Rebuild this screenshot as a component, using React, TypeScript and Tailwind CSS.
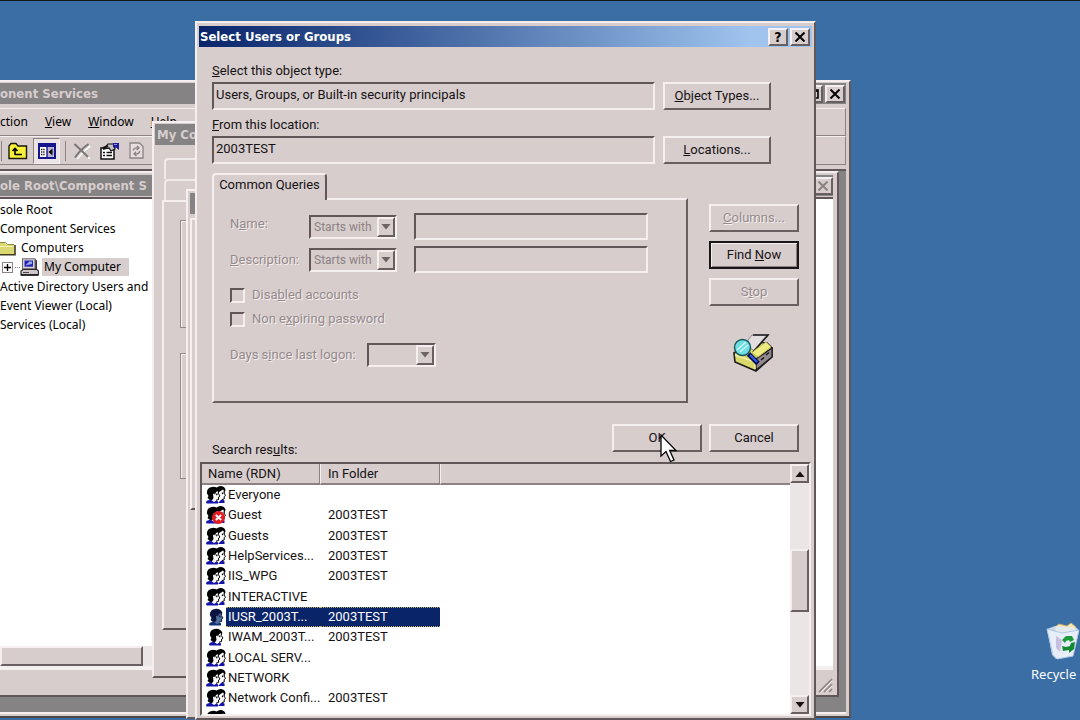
import type { ReactNode } from "react";

const RAISED =
  "border-2 border-t-[#f5efef] border-l-[#f5efef] border-r-[#6a5f60] border-b-[#6a5f60] bg-[#d7cdcd]";
const SUNKEN =
  "border-2 border-t-[#625758] border-l-[#625758] border-r-[#f5efef] border-b-[#f5efef] bg-[#d7cdcd]";
const DISABLED = "text-[#948a8c] [text-shadow:1px_1px_0_#f6f0f0]";

function Caption({ label, children, dim }: { label: string; children: ReactNode; dim?: boolean }) {
  return (
    <button
      type="button"
      aria-label={label}
      className={`flex h-[18px] w-5 items-center justify-center ${RAISED} ${dim ? "text-[#8c8283]" : "text-black"}`}
    >
      {children}
    </button>
  );
}

function Cross() {
  return (
    <svg width="12" height="10" viewBox="0 0 12 10" fill="none" stroke="currentColor" strokeWidth="2">
      <path d="M1.5 0.5 L10.5 9.5 M10.5 0.5 L1.5 9.5" />
    </svg>
  );
}

function Down({ className }: { className?: string }) {
  return (
    <svg width="10" height="6" viewBox="0 0 10 6" className={className}>
      <path d="M0.500 0 H9.500 L5 5.500 Z" fill="currentColor" />
    </svg>
  );
}

/* ---------- console window ---------- */

function FolderUp() {
  return (
    <svg width="20" height="18" viewBox="0 0 20 18">
      <path d="M1 4 L3 1.5 H8 L10 4 H18.5 V16.5 H1 Z" fill="#f6f03c" stroke="#1c1a08" strokeWidth="1.4" />
      <path d="M7 12.5 H14 M7 13 V7.5 M4.5 9 L7 6.5 L9.5 9" fill="none" stroke="#000" strokeWidth="1.6" />
    </svg>
  );
}

function TreeToggle() {
  return (
    <svg width="18" height="16" viewBox="0 0 18 16">
      <rect x="1" y="1" width="16" height="14" fill="#fff" stroke="#14148c" strokeWidth="2" />
      <path d="M0 3 H18" stroke="#14148c" strokeWidth="2" />
      <rect x="9" y="4" width="7" height="10" fill="#b9b4d4" />
      <path d="M9 4 V14" stroke="#14148c" strokeWidth="1.4" />
      <path d="M3 6.5 H7 M3 9 H7 M3 11.5 H7" stroke="#222" strokeWidth="1.4" strokeDasharray="1.4 0.8" />
      <path d="M14.5 5.5 V12.5 L10.5 9 Z" fill="#000" />
    </svg>
  );
}

function DeleteIcon() {
  return (
    <svg width="18" height="16" viewBox="0 0 18 16" fill="none">
      <path d="M2.5 2 Q9 8 16 15 M16.5 2 Q8 8 3 15.5" stroke="#fff" strokeWidth="1.5" transform="translate(1 1)" />
      <path d="M1.5 1 Q8 7 15 14 M15.5 1 Q7 7 2 14.5" stroke="#7c7577" strokeWidth="2" />
    </svg>
  );
}

function PropertiesIcon() {
  return (
    <svg width="20" height="18" viewBox="0 0 20 18">
      <rect x="1" y="6" width="13" height="11" fill="#fff" stroke="#111" strokeWidth="1.5" />
      <path d="M3 10.5 H5 M3 13.5 H5 M6.5 10.5 H12 M6.5 13.5 H12" stroke="#111" strokeWidth="1.4" />
      <path d="M4 7 L8 2 L14 2 L15 7 L11 9 L9 6 Z" fill="#c9c1c1" stroke="#111" strokeWidth="1.2" />
      <path d="M3 6 L8 4" stroke="#111" strokeWidth="2" />
      <path d="M13 1 H19 V8 L16 5.5 H13 Z" fill="#1c1c9c" />
      <path d="M14 2.5 H17" stroke="#8f8fe0" strokeWidth="1" />
    </svg>
  );
}

function RefreshIcon() {
  return (
    <svg width="15" height="17" viewBox="0 0 15 17" fill="none">
      <path d="M1 1 H10.5 L14 4.5 V16 H1 Z" fill="#e6dfdf" stroke="#8a8284" strokeWidth="1.3" />
      <path d="M4 8.5 Q5 5.5 9 6 M8 3.8 L10 6 L7.6 8 M11 9 Q10 12.5 6 12 M7 9.8 L5 12 L7.5 14" stroke="#8a8284" strokeWidth="1.3" />
    </svg>
  );
}

function Folder() {
  return (
    <svg width="16" height="15" viewBox="0 0 16 15">
      <path d="M0 2 H5 L7 4 H14 V13 H0 Z" fill="#d9d873" />
      <path d="M0 1.5 H5.5 L7.5 3.5 H14" stroke="#8d8b3f" fill="none" />
      <path d="M0 13.8 H15 V4" stroke="#3b3a1c" strokeWidth="1.6" fill="none" />
      <path d="M0 5.5 H13" stroke="#f4f3b4" />
    </svg>
  );
}

function Computer() {
  return (
    <svg width="19" height="18" viewBox="0 0 19 18">
      <path d="M3 1 H15 L17 2.5 V11 H4 Z" fill="#3c3640" />
      <rect x="2.5" y="0.8" width="12.5" height="10" fill="#d9d2d4" stroke="#6d6668" />
      <rect x="4.5" y="2.5" width="8.5" height="6.2" fill="#2222b8" />
      <path d="M5.5 7.5 L9 3.5 H12 V6 Z" fill="#9aa8ec" />
      <path d="M1 13 L3 11.5 H17 L18.5 13 V16.8 H1 Z" fill="#cfc7ca" stroke="#2d282c" strokeWidth="1.2" />
      <path d="M3 14.5 H9" stroke="#4c464a" />
      <path d="M1 17 H18" stroke="#111" strokeWidth="1.4" />
    </svg>
  );
}

function ConsoleWindow() {
  return (
    <section className="absolute top-20 left-0 flex h-[638px] w-[851px] flex-col border-t-2 border-r-2 border-b-2 border-t-[#f5efef] border-r-[#625758] border-b-[#4c4648] bg-[#d7cdcd] pt-px pr-[3px] pb-[2px] font-['Noto_Sans','DejaVu_Sans',sans-serif] text-[12px] text-black">
      <header className="flex h-[21px] shrink-0 items-center justify-between bg-[#868384] pr-px font-['DejaVu_Sans_Condensed','DejaVu_Sans',sans-serif] text-[13px] font-bold text-[#d7cdcd]">
        <h1>onent Services</h1>
        <div className="flex gap-[2px]">
          <Caption label="Maximize">
            <svg width="11" height="10" viewBox="0 0 11 10">
              <path d="M1 1 H10 V9 H1 Z M1 2 H10" fill="none" stroke="currentColor" strokeWidth="1.6" />
            </svg>
          </Caption>
          <Caption label="Close">
            <Cross />
          </Caption>
        </div>
      </header>
      <nav className="mt-1 flex h-7 shrink-0 items-center gap-[17px] border-t border-r border-b border-t-[#f5efef] border-r-[#8c8283] border-b-[#8c8283]">
        <a href="#action">ction</a>
        <a href="#view"><u>V</u>iew</a>
        <a href="#window"><u>W</u>indow</a>
        <a href="#help"><u>H</u>elp</a>
      </nav>
      <div className="flex h-[29px] shrink-0 items-center border-t border-r border-b border-t-[#f5efef] border-r-[#8c8283] border-b-[#8c8283] pl-[1px]">
        <span className="h-5 w-[7px] border-l border-[#8c8283]" />
        <button type="button" aria-label="Up one level"><FolderUp /></button>
        <button type="button" aria-label="Show or hide console tree" aria-pressed="true" className="mx-[5px] flex h-[26px] w-[27px] items-center justify-center border border-t-[#8c8283] border-r-[#f5efef] border-b-[#f5efef] border-l-[#8c8283] bg-[#ebe5e5]">
          <TreeToggle />
        </button>
        <span className="h-5 w-[8px] border-l border-[#8c8283]" />
        <div className="flex items-center gap-[9px]">
          <button type="button" aria-label="Delete"><DeleteIcon /></button>
          <button type="button" aria-label="Properties"><PropertiesIcon /></button>
          <button type="button" aria-label="Refresh"><RefreshIcon /></button>
        </div>
      </div>
      <div className="mt-1 flex min-h-0 flex-1 flex-col border-t-2 border-b-2 border-t-[#625758] border-b-[#f5efef] bg-[#868384] pr-[7px] pb-[15px]">
        <div className="flex min-h-0 flex-1 flex-col border-t-2 border-r-2 border-b-2 border-t-[#f5efef] border-r-[#625758] border-b-[#625758] bg-[#d7cdcd] pt-[2px] pr-1">
          <header className="flex h-[21px] shrink-0 items-center justify-between bg-[#868384] font-['DejaVu_Sans_Condensed','DejaVu_Sans',sans-serif] text-[13px] font-bold text-[#d7cdcd]">
            <h2>ole Root\Component S</h2>
            <Caption label="Close child window" dim>
              <Cross />
            </Caption>
          </header>
          <div className="mt-px flex min-h-0 flex-1 border-t-2 border-t-[#625758]">
            <div className="flex w-[152px] flex-col bg-white pt-px">
              <ul className="flex h-[135px] flex-col overflow-hidden whitespace-nowrap [&>li]:flex [&>li]:flex-1 [&>li]:items-center">
                <li>sole Root</li>
                <li>Component Services</li>
                <li className="gap-[5px]"><Folder />Computers</li>
                <li>
                  <button type="button" aria-label="Expand" className="mx-[2px] flex size-[11px] items-center justify-center border border-[#8c8283]">
                    <svg width="7" height="7" viewBox="0 0 7 7"><path d="M3.5 0 V7 M0 3.5 H7" stroke="#000" strokeWidth="1.4" /></svg>
                  </button>
                  <span className="w-[5px] border-t border-dotted border-[#8c8283]" />
                  <Computer />
                  <span className="ml-[3px] bg-[#d7cdcd] pr-[8px] pl-[2px]">My Computer</span>
                </li>
                <li>Active Directory Users and</li>
                <li>Event Viewer (Local)</li>
                <li>Services (Local)</li>
              </ul>
              <div className="mt-auto flex h-5 bg-[#ece5e6]">
                <div className={`w-[143px] ${RAISED}`} />
              </div>
            </div>
            <div className="flex-1 bg-white" />
          </div>
          <footer className="flex h-[29px] shrink-0 items-end justify-end border-t-4 border-t-[#f5efef] py-[2px]">
            <svg width="15" height="15" viewBox="0 0 15 15" fill="none">
              <path d="M1 14 L14 1 M6 14 L14 6 M11 14 L14 11" stroke="#8c8283" strokeWidth="1.6" />
              <path d="M3 14 L14 3 M8 14 L14 8" stroke="#f5efef" strokeWidth="1" />
            </svg>
          </footer>
        </div>
      </div>
    </section>
  );
}

/* ---------- dialogs between the console and the picker ---------- */

function PropertiesDialog() {
  return (
    <section className="absolute top-[121px] left-[152px] flex h-[557px] w-[300px] flex-col border-2 border-t-[#f5efef] border-r-[#625758] border-b-[#625758] border-l-[#f5efef] bg-[#d7cdcd] px-px pt-px pb-[2px] font-['DejaVu_Sans_Condensed','DejaVu_Sans',sans-serif] text-[13px]">
      <h2 className="flex h-[21px] shrink-0 items-center bg-[#868384] pl-[2px] font-bold text-[#d7cdcd]">My Co</h2>
      <div className="mx-[9px] mt-[13px] h-[21px] shrink-0 rounded-tl-sm border-t-2 border-l-2 border-[#f0eaea]" />
      <div className="mx-[9px] h-[21px] shrink-0 rounded-tl-sm border-t-2 border-l-2 border-[#f0eaea]" />
      <div className="mx-[7px] mb-[44px] flex flex-1 flex-col gap-[25px] border-2 border-t-[#f5efef] border-r-[#625758] border-b-[#625758] border-l-[#f5efef] pt-[18px] pl-4">
        <div className="h-[108px] border border-[#948a8c] shadow-[inset_1px_1px_0_#f5efef]" />
        <div className="h-[126px] border border-[#948a8c] shadow-[inset_1px_1px_0_#f5efef]" />
      </div>
    </section>
  );
}

function SecurityDialog() {
  return (
    <section className="absolute top-[189px] left-[186px] flex h-[530px] w-[300px] flex-col border-2 border-t-[#f5efef] border-r-[#625758] border-b-[#625758] border-l-[#f5efef] bg-[#d7cdcd] p-[2px]">
      <div className="h-[21px] shrink-0 bg-[#868384]" />
      <div className="mt-1 h-[292px] border-2 border-t-[#f5efef] border-r-[#625758] border-b-[#625758] border-l-[#f5efef]" />
    </section>
  );
}

/* ---------- select users or groups ---------- */

function PushButton({ children, disabled, primary, className = "" }: { children: ReactNode; disabled?: boolean; primary?: boolean; className?: string }) {
  return (
    <button
      type="button"
      disabled={disabled}
      className={`h-7 shrink-0 ${className} ${
        primary
          ? "border-2 border-[#1a1617] bg-[#d7cdcd] shadow-[inset_1px_1px_0_#f5efef,inset_-1px_-1px_0_#8c8283]"
          : RAISED
      } ${disabled ? DISABLED : ""}`}
    >
      {children}
    </button>
  );
}

function DropDown({ id, label, value, className }: { id: string; label?: string; value: string; className: string }) {
  return (
    <div className={`relative h-6 ${className}`}>
      <select id={id} aria-label={label} disabled className={`size-full appearance-none pl-[3px] text-[12px] opacity-100 ${SUNKEN} text-[#8c8283]`}>
        <option>{value}</option>
      </select>
      <span className={`pointer-events-none absolute inset-y-[2px] right-[2px] flex w-[18px] items-center justify-center ${RAISED} text-[#6d6465]`}>
        <Down />
      </span>
    </div>
  );
}

function DirectorySearch() {
  return (
    <svg width="42" height="40" viewBox="0 0 42 40">
      <path d="M1 20 L18 9 L34 10 L39 15 V24 L23 38 L2 29 Z" fill="#d9d86a" stroke="#1d1a1a" strokeWidth="1.6" />
      <path d="M23 26 L39 15 V24 L23 37 Z" fill="#8f898e" stroke="#1d1a1a" strokeWidth="1.3" />
      <path d="M2 22 L22 29 V36" fill="none" stroke="#f3f0a6" strokeWidth="1.4" />
      <path d="M15 7 L19 2 H35 L22 18 L15 14 Z" fill="#e3dddf" stroke="#8d868a" strokeWidth="1" />
      <path d="M20 2 H35 L20 19" fill="none" stroke="#1d1a1a" strokeWidth="1.6" />
      <path d="M22 17 L33 9 L38 14 L25 24 L19 20 Z" fill="#eeeb80" stroke="#b4b050" strokeWidth="0.8" />
      <path d="M28 27 L31 24.500 M33 22 L36 19.500" stroke="#1d1a1a" strokeWidth="1.6" />
      <circle cx="9.500" cy="14.500" r="8" fill="#6fdde2" stroke="#14585c" strokeWidth="1.4" />
      <path d="M4 17 L13 9 M7 19 L15 12" stroke="#c9f6f6" strokeWidth="1.600" />
      <path d="M15.500 21 L25 30.500" stroke="#0b0b54" strokeWidth="5" />
      <path d="M17 22 L24 29" stroke="#2e66e6" strokeWidth="2" />
    </svg>
  );
}

type Kind = "group" | "user" | "blocked" | "selected";

function Head({ kind }: { kind: Kind }) {
  const sel = kind === "selected";
  const hair = sel ? "#0a1440" : "#000";
  const face = sel ? "#52709c" : "#fff";
  const coat = sel ? "#123078" : "#1414a8";
  const single = sel || kind === "user";
  return (
    <svg width="20" height="18" viewBox="0 0 20 18" className="shrink-0">
      {!single && (
        <g>
          <path d="M9 3.500 Q11 0 15 0 Q19 0.500 19.500 4 L18.500 7 L12 9 Z" fill={hair} />
          <path d="M13 6 L17 3.500 L18.500 5 L18 7 L19.300 9.500 L18 10.500 V13 L15.500 14 H12 Z" fill={face} />
          <path d="M18.300 4 L18 7 L19.500 9.500 L18.200 10.500 V13 L16 13.500" fill="none" stroke={hair} strokeWidth="1" />
          <path d="M16.500 6.500 V8.200" stroke={hair} strokeWidth="1.300" />
          <path d="M12 17 L15.500 13.500 L18.500 14.500 V17 Z" fill={coat} />
        </g>
      )}
      <g transform={single ? "translate(3 0)" : undefined}>
        <path d="M1 7.500 Q0.500 3 4 1.500 Q9 -0.500 12 2.500 L13.500 5 L11 8 L8 15 L4 14 L1.500 12 L2.500 10 Z" fill={hair} />
        <path d="M7 8 L8.500 7.500 L9 9 L10 6 L12.500 5 L12.300 7.500 L14 10 L12.500 11 V13.500 L10 14 L9.500 17 L5.500 15 L7.500 12 Z" fill={face} />
        <path d="M12.500 5 L12.300 7.500 L14 10 L12.600 11 V13.500 L10 14.200" fill="none" stroke={hair} strokeWidth="1" />
        <path d="M10.800 7.500 V9.200" stroke={hair} strokeWidth="1.300" />
        <path d="M0 17 L0.500 15 L4.500 13.500 L8 16 L10.500 14.500 L12 15.500 V17.500 H1 Z" fill={coat} />
      </g>
      {kind === "blocked" && (
        <g>
          <circle cx="12.500" cy="11.500" r="6.500" fill="#e21d22" />
          <path d="M9.800 9 L15.200 14 M15.200 9 L9.800 14" stroke="#fff" strokeWidth="1.800" />
        </g>
      )}
    </svg>
  );
}

const rows: { name: string; folder: string; kind: Kind }[] = [
  { name: "Everyone", folder: "", kind: "group" },
  { name: "Guest", folder: "2003TEST", kind: "blocked" },
  { name: "Guests", folder: "2003TEST", kind: "group" },
  { name: "HelpServices...", folder: "2003TEST", kind: "group" },
  { name: "IIS_WPG", folder: "2003TEST", kind: "group" },
  { name: "INTERACTIVE", folder: "", kind: "group" },
  { name: "IUSR_2003T...", folder: "2003TEST", kind: "selected" },
  { name: "IWAM_2003T...", folder: "2003TEST", kind: "user" },
  { name: "LOCAL SERV...", folder: "", kind: "group" },
  { name: "NETWORK", folder: "", kind: "group" },
  { name: "Network Confi...", folder: "2003TEST", kind: "group" },
  { name: "NETWORK S...", folder: "", kind: "group" },
];

function Results() {
  return (
    <div className="mx-px mt-[3px] flex h-[254px] overflow-hidden border-2 border-t-[#625758] border-r-[#f5efef] border-b-[#f5efef] border-l-[#625758] bg-white">
      <div className="min-w-0 flex-1 overflow-hidden">
        <table aria-labelledby="results" className="h-[265px] w-full table-fixed border-separate border-spacing-0 text-left whitespace-nowrap">
          <thead>
            <tr className="h-[21px] bg-[#d7cdcd] leading-[19px] [&>th]:border-b-2 [&>th]:border-[#8c8283] [&>th]:p-0 [&>th]:font-normal">
              <th className="w-[118px] border-r"><span className="pl-[6px]">Name (RDN)</span></th>
              <th className="w-[120px] border-r border-l border-l-[#f5efef]!"><span className="pl-[7px]">In Folder</span></th>
              <th className="border-l border-l-[#f5efef]!" />
            </tr>
          </thead>
          <tbody className="leading-[18px]">
            {rows.map((r) => {
              const sel = r.kind === "selected";
              return (
                <tr key={r.name} aria-selected={sel}>
                  <td className="p-0">
                    <div className="flex h-5 items-center pl-1">
                      <Head kind={r.kind} />
                      <span className={`flex-1 pl-[2px] ${sel ? "border-y border-dotted border-[#b8b060] bg-[#0a246a] text-white" : "border-y border-transparent"}`}>{r.name}</span>
                    </div>
                  </td>
                  <td className="p-0">
                    <div className="flex h-5 items-center">
                      <span className={`flex-1 pl-2 ${sel ? "border-y border-dotted border-[#b8b060] bg-[#0a246a] text-white" : "border-y border-transparent"}`}>{r.folder || "\u00a0"}</span>
                    </div>
                  </td>
                  <td className="p-0" />
                </tr>
              );
            })}
          </tbody>
        </table>
      </div>
      <div className="flex w-[19px] flex-col bg-[#ece5e6]">
        <button type="button" aria-label="Scroll up" className={`flex h-[19px] items-center justify-center ${RAISED}`}>
          <Down className="rotate-180" />
        </button>
        <div className={`mt-[66px] h-[63px] ${RAISED}`} />
        <button type="button" aria-label="Scroll down" className={`mt-auto flex h-[19px] items-center justify-center ${RAISED}`}>
          <Down />
        </button>
      </div>
    </div>
  );
}

function SelectDialog() {
  return (
    <section className="absolute top-[21px] left-[195px] w-[621px] border-2 border-t-[#f5efef] border-r-[#625758] border-b-[#625758] border-l-[#f5efef] bg-[#d7cdcd] px-[2px] pt-[3px] pb-[2px] font-['Roboto','Liberation_Sans',sans-serif] text-[13px] leading-[18px] text-[#161213]">
      <header className="flex h-[21px] items-center justify-between bg-linear-to-r from-[#0a246a] to-[#a0c4ee] to-90% pr-[2px] pl-px font-['DejaVu_Sans_Condensed','DejaVu_Sans',sans-serif] font-bold text-white">
        <h2>Select Users or Groups</h2>
        <div className="flex gap-[2px]">
          <Caption label="Help">
            <span className="text-[14px] leading-[14px]">?</span>
          </Caption>
          <Caption label="Close">
            <Cross />
          </Caption>
        </div>
      </header>

      <form className="pt-[15px]" onSubmit={(e) => e.preventDefault()}>
        <div className="mr-[41px] ml-[13px] grid grid-cols-[1fr_108px] gap-x-2 gap-y-[2px]">
          <label htmlFor="type" className="col-span-2"><u>S</u>elect this object type:</label>
          <input id="type" readOnly value="Users, Groups, or Built-in security principals" className={`h-7 min-w-0 px-[2px] pb-[3px] outline-none ${SUNKEN}`} />
          <PushButton><u>O</u>bject Types...</PushButton>
          <label htmlFor="location" className="col-span-2 mt-1"><u>F</u>rom this location:</label>
          <input id="location" readOnly value="2003TEST" className={`h-7 min-w-0 px-[2px] pb-[3px] outline-none ${SUNKEN}`} />
          <PushButton><u>L</u>ocations...</PushButton>
        </div>

        <div className="mx-[13px] mt-[9px] flex gap-[21px]">
          <div className="min-w-0 flex-1">
            <div role="tablist" className="flex">
              <button type="button" role="tab" aria-selected="true" className="relative -mb-[2px] h-[27px] w-[115px] rounded-t-sm border-t-2 border-r-2 border-l-2 border-t-[#f5efef] border-r-[#625758] border-l-[#f5efef] bg-[#d7cdcd] pb-[5px]">
                Common Queries
              </button>
            </div>
            <div role="tabpanel" className={`h-[205px] pt-[13px] pl-4 ${DISABLED} ${RAISED}`}>
              <div className="grid grid-cols-[79px_88px_1fr] items-center gap-y-[6px]">
                <label htmlFor="name" className="pb-[5px]">N<u>a</u>me:</label>
                <DropDown id="name-match" label="Name condition" value="Starts with" className="w-[88px]" />
                <input id="name" disabled className={`ml-[17px] h-[27px] w-[234px] ${SUNKEN}`} />
                <label htmlFor="description"><u>D</u>escription:</label>
                <DropDown id="description-match" label="Description condition" value="Starts with" className="w-[88px]" />
                <input id="description" disabled className={`ml-[17px] h-[27px] w-[234px] ${SUNKEN}`} />
              </div>
              <div className="mt-[13px] flex flex-col gap-[6px]">
                <label className="flex items-center gap-[7px]">
                  <input type="checkbox" disabled className={`size-[15px] appearance-none ${SUNKEN}`} />
                  <span>Disa<u>b</u>led accounts</span>
                </label>
                <label className="flex items-center gap-[7px]">
                  <input type="checkbox" disabled className={`size-[15px] appearance-none ${SUNKEN}`} />
                  <span>Non e<u>x</u>piring password</span>
                </label>
              </div>
              <div className="mt-[15px] flex items-center gap-[11px]">
                <label htmlFor="days">Days s<u>i</u>nce last logon:</label>
                <DropDown id="days" value="" className="w-[69px]" />
              </div>
            </div>
          </div>
          <div className="flex w-[90px] flex-col gap-[9px] pt-[31px]">
            <PushButton disabled><u>C</u>olumns...</PushButton>
            <PushButton primary>Find <u>N</u>ow</PushButton>
            <PushButton disabled>S<u>t</u>op</PushButton>
            <div className="mt-[18px] ml-6"><DirectorySearch /></div>
          </div>
        </div>

        <div className="mx-[13px] mt-[21px] flex h-[35px] gap-[7px]">
          <span id="results" className="mr-auto self-end">Search res<u>u</u>lts:</span>
          <PushButton className="w-[90px]">OK</PushButton>
          <PushButton className="w-[90px]">Cancel</PushButton>
        </div>
        <Results />
      </form>
    </section>
  );
}

function RecycleBin() {
  return (
    <a href="#recycle" className="absolute top-[622px] left-[1031px] flex w-[68px] flex-col items-start gap-[5px] font-['Noto_Sans',sans-serif] text-[13px] leading-[18px] text-white">
      <svg width="36" height="38" viewBox="0 0 36 38" className="ml-[15px]">
        <path d="M9 5 L13 2 L21 4 L25 1 L30 5 L28 12 H10 Z" fill="#f4e7b8" stroke="#c9a95e" strokeWidth="0.800" />
        <path d="M1 7 L9 4 L31 6 L33 9 L27 34 L10 37 L6 33 Z" fill="#dfe9f4" opacity="0.850" />
        <path d="M1 7 L16 11 L33 8 L27 34 L11 37 L7 33 Z" fill="#e7eef8" stroke="#b3c8e2" strokeWidth="1" />
        <path d="M10 14 L16 18 L14 30 L10 26 Z" fill="#c7bfe0" />
        <path d="M16 18 L20 14 L26 14 L28 18 L24 20 L23 18 L20 19 L19 21 Z" fill="#1c9a3a" />
        <path d="M29 20 L28 27 L23 31 V28 L17 29 L16 24 L20 25 L24 24 L25 21 Z" fill="#148a30" />
      </svg>
      Recycle
    </a>
  );
}

export default function App() {
  return (
    <main className="relative h-screen w-full cursor-default overflow-hidden bg-[#3a6ea5] shadow-[inset_0_1px_0_#101820]">
      <RecycleBin />
      <ConsoleWindow />
      <PropertiesDialog />
      <SecurityDialog />
      <SelectDialog />
      <svg width="18" height="30" viewBox="0 0 18 30" className="pointer-events-none absolute top-[434px] left-[660px]">
        <path d="M1 1 V22 L6 17.500 L10.500 27.500 L14 26 L9.700 16.500 H16 Z" fill="#fff" stroke="#000" strokeWidth="1.300" />
      </svg>
    </main>
  );
}
